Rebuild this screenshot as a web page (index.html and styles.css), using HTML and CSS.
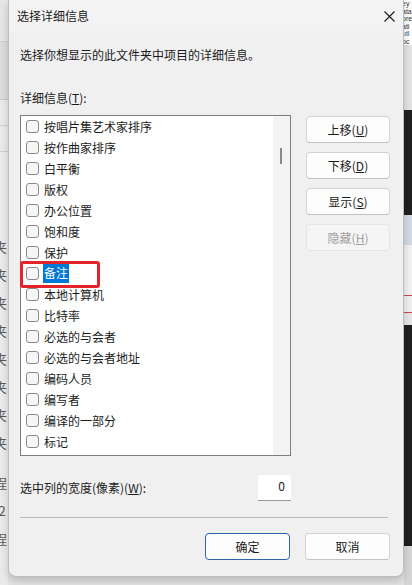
FILE: index.html
```html
<!DOCTYPE html>
<html lang="zh-CN">
<head>
<meta charset="utf-8">
<title>选择详细信息</title>
<link rel="stylesheet" href="styles.css">
</head>
<body>
<div class="screen">
  <div class="bg-left">
    <div class="bl-a"></div>
    <div class="bl-b"></div>
    <div class="bl-c">
      <div class="bl-line"></div>
      <div class="bl-line"></div>
    </div>
    <div class="frag-list">
      <div class="frag">夹</div>
      <div class="frag">夹</div>
      <div class="frag">夹</div>
      <div class="frag">夹</div>
      <div class="frag">夹</div>
      <div class="frag">夹</div>
      <div class="frag">夹</div>
      <div class="frag">夹</div>
      <div class="frag-gap"></div>
      <div class="frag">程</div>
      <div class="frag">(2</div>
      <div class="frag">程</div>
    </div>
  </div>

  <div class="dialog">
    <div class="titlebar">
      <span class="title">选择详细信息</span>
      <svg class="close" width="11" height="11" viewBox="0 0 11 11"><path d="M0.5 0.5 L10.5 10.5 M10.5 0.5 L0.5 10.5" stroke="#1a1a1a" stroke-width="1.1" fill="none"/></svg>
    </div>
    <div class="content">
      <div class="desc">选择你想显示的此文件夹中项目的详细信息。</div>
      <div class="label-details">详细信息(<u>T</u>):</div>
      <div class="main">
        <div class="list">
          <div class="items">
            <div class="item"><span class="cb"></span><span class="txt">按唱片集艺术家排序</span></div>
            <div class="item"><span class="cb"></span><span class="txt">按作曲家排序</span></div>
            <div class="item"><span class="cb"></span><span class="txt">白平衡</span></div>
            <div class="item"><span class="cb"></span><span class="txt">版权</span></div>
            <div class="item"><span class="cb"></span><span class="txt">办公位置</span></div>
            <div class="item"><span class="cb"></span><span class="txt">饱和度</span></div>
            <div class="item"><span class="cb"></span><span class="txt">保护</span></div>
            <div class="item"><span class="cb"></span><span class="txt sel">备注</span></div>
            <div class="item"><span class="cb"></span><span class="txt">本地计算机</span></div>
            <div class="item"><span class="cb"></span><span class="txt">比特率</span></div>
            <div class="item"><span class="cb"></span><span class="txt">必选的与会者</span></div>
            <div class="item"><span class="cb"></span><span class="txt">必选的与会者地址</span></div>
            <div class="item"><span class="cb"></span><span class="txt">编码人员</span></div>
            <div class="item"><span class="cb"></span><span class="txt">编写者</span></div>
            <div class="item"><span class="cb"></span><span class="txt">编译的一部分</span></div>
            <div class="item"><span class="cb"></span><span class="txt">标记</span></div>
          </div>
          <div class="scrollbar"><div class="thumb"></div></div>
          <div class="redmark"></div>
        </div>
        <div class="side-buttons">
          <div class="btn">上移(<u>U</u>)</div>
          <div class="btn">下移(<u>D</u>)</div>
          <div class="btn">显示(<u>S</u>)</div>
          <div class="btn disabled">隐藏(<u>H</u>)</div>
        </div>
      </div>
      <div class="width-row">
        <span class="width-label">选中列的宽度(像素)(<u>W</u>):</span>
        <div class="num">0</div>
      </div>
      <div class="sep"></div>
      <div class="footer">
        <div class="btn default">确定</div>
        <div class="btn">取消</div>
      </div>
    </div>
  </div>

  <div class="bg-right">
    <div class="br-top">
      <div class="tiny">ey</div>
      <div class="tiny">ata</div>
      <div class="tiny">ore</div>
      <div class="tiny">ati</div>
      <div class="tiny blue">utl</div>
      <div class="tiny">oc</div>
    </div>
    <div class="br-grey"></div>
    <div class="br-dark1"></div>
    <div class="br-blue"></div>
    <div class="br-light"></div>
    <div class="br-red"></div>
    <div class="br-light2"></div>
    <div class="br-red"></div>
    <div class="br-light3"></div>
    <div class="br-dark2"></div>
    <div class="br-bottom"></div>
  </div>
</div>
</body>
</html>
```

FILE: styles.css
```css
* { box-sizing: border-box; }
html, body { margin: 0; padding: 0; }
body {
  width: 412px;
  height: 585px;
  overflow: hidden;
  background: #e4e4e4;
  font-family: "Noto Sans CJK SC", "Noto Sans", sans-serif;
  font-size: 12px;
  color: #1b1b1b;
}
u { text-decoration: underline; text-underline-offset: 1px; }

.screen {
  display: flex;
  width: 412px;
  height: 585px;
}

/* left background window fragment */
.bg-left {
  width: 8px;
  height: 585px;
  background: #ebebeb;
  position: relative;
  overflow: hidden;
}
.bl-a { height: 42px; background: #e6e6e6; border-bottom: 1px solid #cfcfcf; }
.bl-b { height: 58px; background: #dcdcdc; border-bottom: 1px solid #c9c9c9; }
.bl-c { height: 0; }
.bl-line { height: 26px; border-bottom: 1px solid #d2d2d2; }
.frag-list {
  position: absolute;
  left: 0;
  top: 233px;
  width: 8px;
}
.frag {
  height: 28px;
  line-height: 28px;
  font-size: 13px;
  color: #5a5a5a;
  margin-left: -6px;
  white-space: nowrap;
}
.frag-gap { height: 12px; }

/* dialog */
.dialog {
  width: 396px;
  height: 577px;
  background: #f0f0f0;
  border: 1px solid #bdbdbd;
  border-top: none;
  border-radius: 0 0 8px 8px;
  box-shadow: 0 4px 8px rgba(0,0,0,0.18);
  display: flex;
  flex-direction: column;
  position: relative;
  z-index: 1;
}
.titlebar {
  height: 31px;
  background: #f3f3f3;
  display: flex;
  align-items: center;
  justify-content: space-between;
  padding: 0 8px 0 8px;
}
.title { font-size: 12px; line-height: 16px; color: #1a1a1a; }
.close { display: block; margin-top: 1px; }

.content {
  padding: 0 13px 0 11px;
  display: flex;
  flex-direction: column;
}
.desc { margin-top: 16px; line-height: 16px; }
.label-details { margin-top: 27px; line-height: 16px; }

.main {
  margin-top: 9px;
  display: flex;
  gap: 15px;
}
.list {
  position: relative;
  width: 271px;
  height: 341px;
  background: #fff;
  border: 1px solid #7d7d7d;
  display: flex;
}
.items { flex: 1; }
.item {
  height: 21px;
  display: flex;
  align-items: center;
  padding-left: 5px;
}
.cb {
  width: 13px;
  height: 13px;
  border: 1px solid #8a8a8a;
  border-radius: 3px;
  background: #f6f6f6;
  flex: none;
}
.txt {
  margin-left: 5px;
  line-height: 16px;
  white-space: nowrap;
}
.txt.sel {
  background: #0078d7;
  color: #fff;
  padding: 1px 1px 2px 1px;
  margin-left: 4px;
}
.scrollbar {
  width: 17px;
  height: 100%;
  background: #f3f3f3;
  position: relative;
}
.thumb {
  width: 2px;
  height: 16px;
  background: #8a8a8a;
  margin: 32px 0 0 7px;
}
.redmark {
  position: absolute;
  left: -1px;
  top: 145px;
  width: 80px;
  height: 27px;
  border: 3px solid #e5232b;
  border-radius: 3px;
}

.side-buttons {
  width: 84px;
  margin-top: 1px;
  display: flex;
  flex-direction: column;
  gap: 9px;
}
.btn {
  height: 27px;
  background: #fdfdfd;
  border: 1px solid #d3d3d3;
  border-bottom-color: #c2c2c2;
  border-radius: 4px;
  display: flex;
  align-items: center;
  justify-content: center;
  line-height: 16px;
  color: #1b1b1b;
}
.btn.disabled {
  background: #f5f5f5;
  border-color: #e5e5e5;
  color: #a0a0a0;
}

.width-row {
  margin-top: 19px;
  width: 271px;
  height: 26px;
  display: flex;
  align-items: center;
  justify-content: space-between;
}
.width-label { line-height: 16px; }
.num {
  width: 33px;
  height: 26px;
  background: #fff;
  border-bottom: 1px solid #9a9a9a;
  border-radius: 3px 3px 0 0;
  text-align: right;
  padding-right: 6px;
  line-height: 22px;
}
.sep {
  margin-top: 16px;
  height: 1px;
  background: #b9b9b9;
  margin-right: 2px;
}
.footer {
  margin-top: 15px;
  display: flex;
  justify-content: flex-end;
  gap: 15px;
}
.footer .btn { width: 85px; }
.btn.default { border: 1px solid #2b66a6; }

/* right background fragment */
.bg-right {
  width: 8px;
  height: 585px;
  display: flex;
  flex-direction: column;
  overflow: hidden;
}
.br-top { height: 45px; background: #fff; padding-top: 0; }
.tiny {
  height: 7.5px;
  font-size: 7px;
  line-height: 7.5px;
  margin-left: -2px;
  color: #333;
  white-space: nowrap;
  font-family: "Liberation Sans", sans-serif;
}
.tiny.blue { color: #2c5a8c; }
.br-grey { height: 65px; background: #e3e3e3; }
.br-dark1 { height: 105px; background: #202020; }
.br-blue { height: 30px; background: #d3dae3; }
.br-light { height: 50px; background: #f2f2f2; }
.br-red { height: 1px; background: #d04848; }
.br-light2 { height: 16px; background: #f0f0f0; }
.br-light3 { height: 12px; background: #e6e6e6; }
.br-dark2 { height: 221px; background: #1f1f1f; }
.br-bottom { flex: 1; background: #d6d6d6; }
```
